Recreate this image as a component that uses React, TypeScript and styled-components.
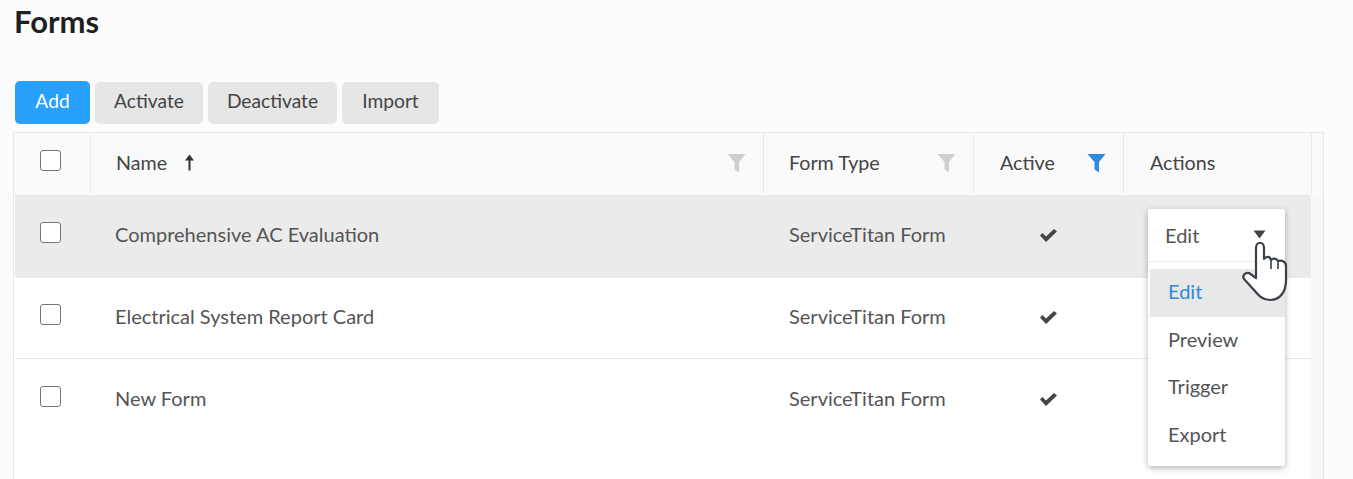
import styled, { createGlobalStyle } from 'styled-components';

const GlobalStyle = createGlobalStyle`
  html, body {
    margin: 0;
    padding: 0;
    background: #fcfcfc;
    overflow: hidden;
  }
  * { box-sizing: border-box; }
`

const Page = styled.div`
  width: 1353px;
  height: 479px;
  overflow: hidden;
  padding: 0 29px 0 13px;
  font-family: "Lato", "Open Sans", sans-serif;
  font-size: 20px;
  color: #444;
`

const Title = styled.h1`
  margin: 0;
  padding-left: 1px;
  height: 81px;
  padding-top: 3px;
  font-size: 31px;
  line-height: 36px;
  font-weight: 700;
  color: #1f1f1f;
`

const Toolbar = styled.div`
  display: flex;
  align-items: flex-end;
  gap: 5px;
  padding-left: 2px;
  height: 43px;
  margin-bottom: 8px;
`

const Button = styled.button<{ $primary?: boolean; $width: number }>`
  height: ${p => (p.$primary ? 43 : 42)}px;
  width: ${p => p.$width}px;
  border: none;
  border-radius: 5px;
  padding: 0 0 5px;
  font: inherit;
  font-size: 19.2px;
  background: ${p => (p.$primary ? '#29a0fb' : '#e6e6e6')};
  color: ${p => (p.$primary ? '#fff' : '#444')};
`

const Table = styled.div`
  position: relative;
  height: 347px;
  border: 1px solid #e8e8e8;
  border-bottom: none;
  background: #fff;
`

const HeaderRow = styled.div`
  display: grid;
  grid-template-columns: 77px 673px 210px 150px 188px 1fr;
  height: 63px;
  background: #fafafa;
  border-bottom: 1px solid #e8e8e8;
`

const HeaderCell = styled.div<{ $last?: boolean; $pad?: number }>`
  display: flex;
  align-items: center;
  justify-content: space-between;
  padding: 0 17px 2px ${p => p.$pad ?? 25}px;
  margin-top: 1px;
  margin-bottom: 2px;
  border-right: ${p => (p.$last ? 'none' : '1px solid #e8e8e8')};
  font-size: 19.7px;
  color: #444;
`

const HeaderCheck = styled.div`
  margin-top: 1px;
  margin-bottom: 2px;
  padding: 16px 0 0 26px;
  border-right: 1px solid #e8e8e8;
`

const CheckCell = styled.div<{ $shift: number }>`
  padding: ${p => 26 + p.$shift}px 0 0 25px;
`

const NameLabel = styled.span`
  display: flex;
  align-items: center;
  gap: 17px;
`

const Row = styled.div<{ $hover?: boolean; $plain?: boolean; $height: number }>`
  display: grid;
  grid-template-columns: 76px 673px 210px 150px 187px 1fr;
  height: ${p => p.$height}px;
  margin-left: 1px;
  border-bottom: ${p => (p.$plain ? 'none' : '1px solid #e8e8e8')};
  background: ${p => (p.$hover ? '#ebebeb' : '#fff')};
`

const Cell = styled.div<{ $pad: number; $shift: number }>`
  padding: ${p => 27 + p.$shift}px 0 0 ${p => p.$pad}px;
  line-height: 22px;
  color: #555;
`

const CheckMark = styled.div<{ $shift: number }>`
  padding: ${p => 32 + p.$shift}px 0 0 65px;
  line-height: 0;
`

const Gutter = styled.div`
  background: #f8f8f8;
  margin-top: -1px;
  margin-bottom: -1px;
`

const Box = styled.span`
  display: block;
  width: 21px;
  height: 21px;
  border: 1px solid #757575;
  border-radius: 3px;
  background: #fff;
`

const Menu = styled.div`
  position: absolute;
  left: 1134px;
  top: 76px;
  width: 137px;
  height: 257px;
  background: #fff;
  border-radius: 2px;
  box-shadow: 0 2px 6px rgba(0, 0, 0, 0.3);
  color: #555;
`

const MenuHead = styled.div`
  display: flex;
  align-items: center;
  justify-content: space-between;
  height: 53px;
  padding: 0 19px 1px 17px;
  border-bottom: 1px solid #ececec;
  margin-bottom: 7px;
`

const MenuItem = styled.div<{ $active?: boolean }>`
  display: flex;
  align-items: center;
  height: 47.6px;
  margin-left: 2px;
  padding: 0 0 3px 18px;
  background: ${p => (p.$active ? '#e8e8e8' : 'transparent')};
  color: ${p => (p.$active ? '#2e8be0' : '#555')};
`

const Hand = styled.svg`
  position: absolute;
  left: 1226px;
  top: 107px;
`

function Funnel({ color }: { color: string }) {
  return (
    <svg width="19" height="20" viewBox="0 0 19 20">
      <path d="M0.5 1 H18.5 L12 9 V19.5 L7.5 16.5 V9 Z" fill={color} />
    </svg>
  )
}

function Tick() {
  return (
    <svg width="19" height="15" viewBox="0 0 19 15">
      <path d="M1 7.5 L3.5 5 L7 8.5 L15 1 L18 3.5 L7 14 Z" fill="#444" />
    </svg>
  )
}

function SortArrow() {
  return (
    <svg width="11" height="17" viewBox="0 0 11 17">
      <path d="M5.5 0.5 L10 6.5 H6.5 V16.5 H4.5 V6.5 H1 Z" fill="#333" />
    </svg>
  )
}

function Caret() {
  return (
    <svg width="13" height="9" viewBox="0 0 13 9">
      <path d="M0.5 0.5 H12.5 L6.5 8.5 Z" fill="#444" />
    </svg>
  )
}

const rows = [
  { name: 'Comprehensive AC Evaluation', height: 82, shift: 0, hover: true },
  { name: 'Electrical System Report Card', height: 81, shift: 0 },
  { name: 'New Form', height: 120, shift: 1, plain: true },
]

const menuItems = ['Edit', 'Preview', 'Trigger', 'Export']

export default function App() {
  return (
    <Page>
      <GlobalStyle />
      <Title>Forms</Title>
      <Toolbar>
        <Button $primary $width={75}>Add</Button>
        <Button $width={108}>Activate</Button>
        <Button $width={129}>Deactivate</Button>
        <Button $width={97}>Import</Button>
      </Toolbar>
      <Table>
        <HeaderRow>
          <HeaderCheck><Box /></HeaderCheck>
          <HeaderCell>
            <NameLabel>Name <SortArrow /></NameLabel>
            <Funnel color="#cfcfcf" />
          </HeaderCell>
          <HeaderCell>
            Form Type
            <Funnel color="#cfcfcf" />
          </HeaderCell>
          <HeaderCell $pad={26}>
            Active
            <Funnel color="#2e8be0" />
          </HeaderCell>
          <HeaderCell $pad={26}>Actions</HeaderCell>
          <HeaderCell $last />
        </HeaderRow>
        {rows.map(r => (
          <Row key={r.name} $height={r.height} $hover={r.hover} $plain={r.plain}>
            <CheckCell $shift={r.shift}><Box /></CheckCell>
            <Cell $pad={24} $shift={r.shift}>{r.name}</Cell>
            <Cell $pad={25} $shift={r.shift}>ServiceTitan Form</Cell>
            <CheckMark $shift={r.shift}><Tick /></CheckMark>
            <div />
            <Gutter />
          </Row>
        ))}
        <Menu>
          <MenuHead>Edit <Caret /></MenuHead>
          {menuItems.map((m, i) => (
            <MenuItem key={m} $active={i === 0}>{m}</MenuItem>
          ))}
        </Menu>
        <Hand width="50" height="64" viewBox="0 0 50 64">
          <path
            d="M16 8 C16 1 24 1 24 8 V19 C26 16 30 16 31 20 C33 18 36 18 38 21 C41 20 46 21 46 26 V40 C46 52 40 60 30 60 C23 60 19 56 14 50 L4 39 C2 36 5 32 9 33 L16 38 Z"
            fill="#fff"
            stroke="#3a3f4a"
            strokeWidth="2.2"
            strokeLinejoin="round"
          />
          <path d="M31 20 V29 M38 21 V29" stroke="#3a3f4a" strokeWidth="1.6" fill="none" />
        </Hand>
      </Table>
    </Page>
  )
}
